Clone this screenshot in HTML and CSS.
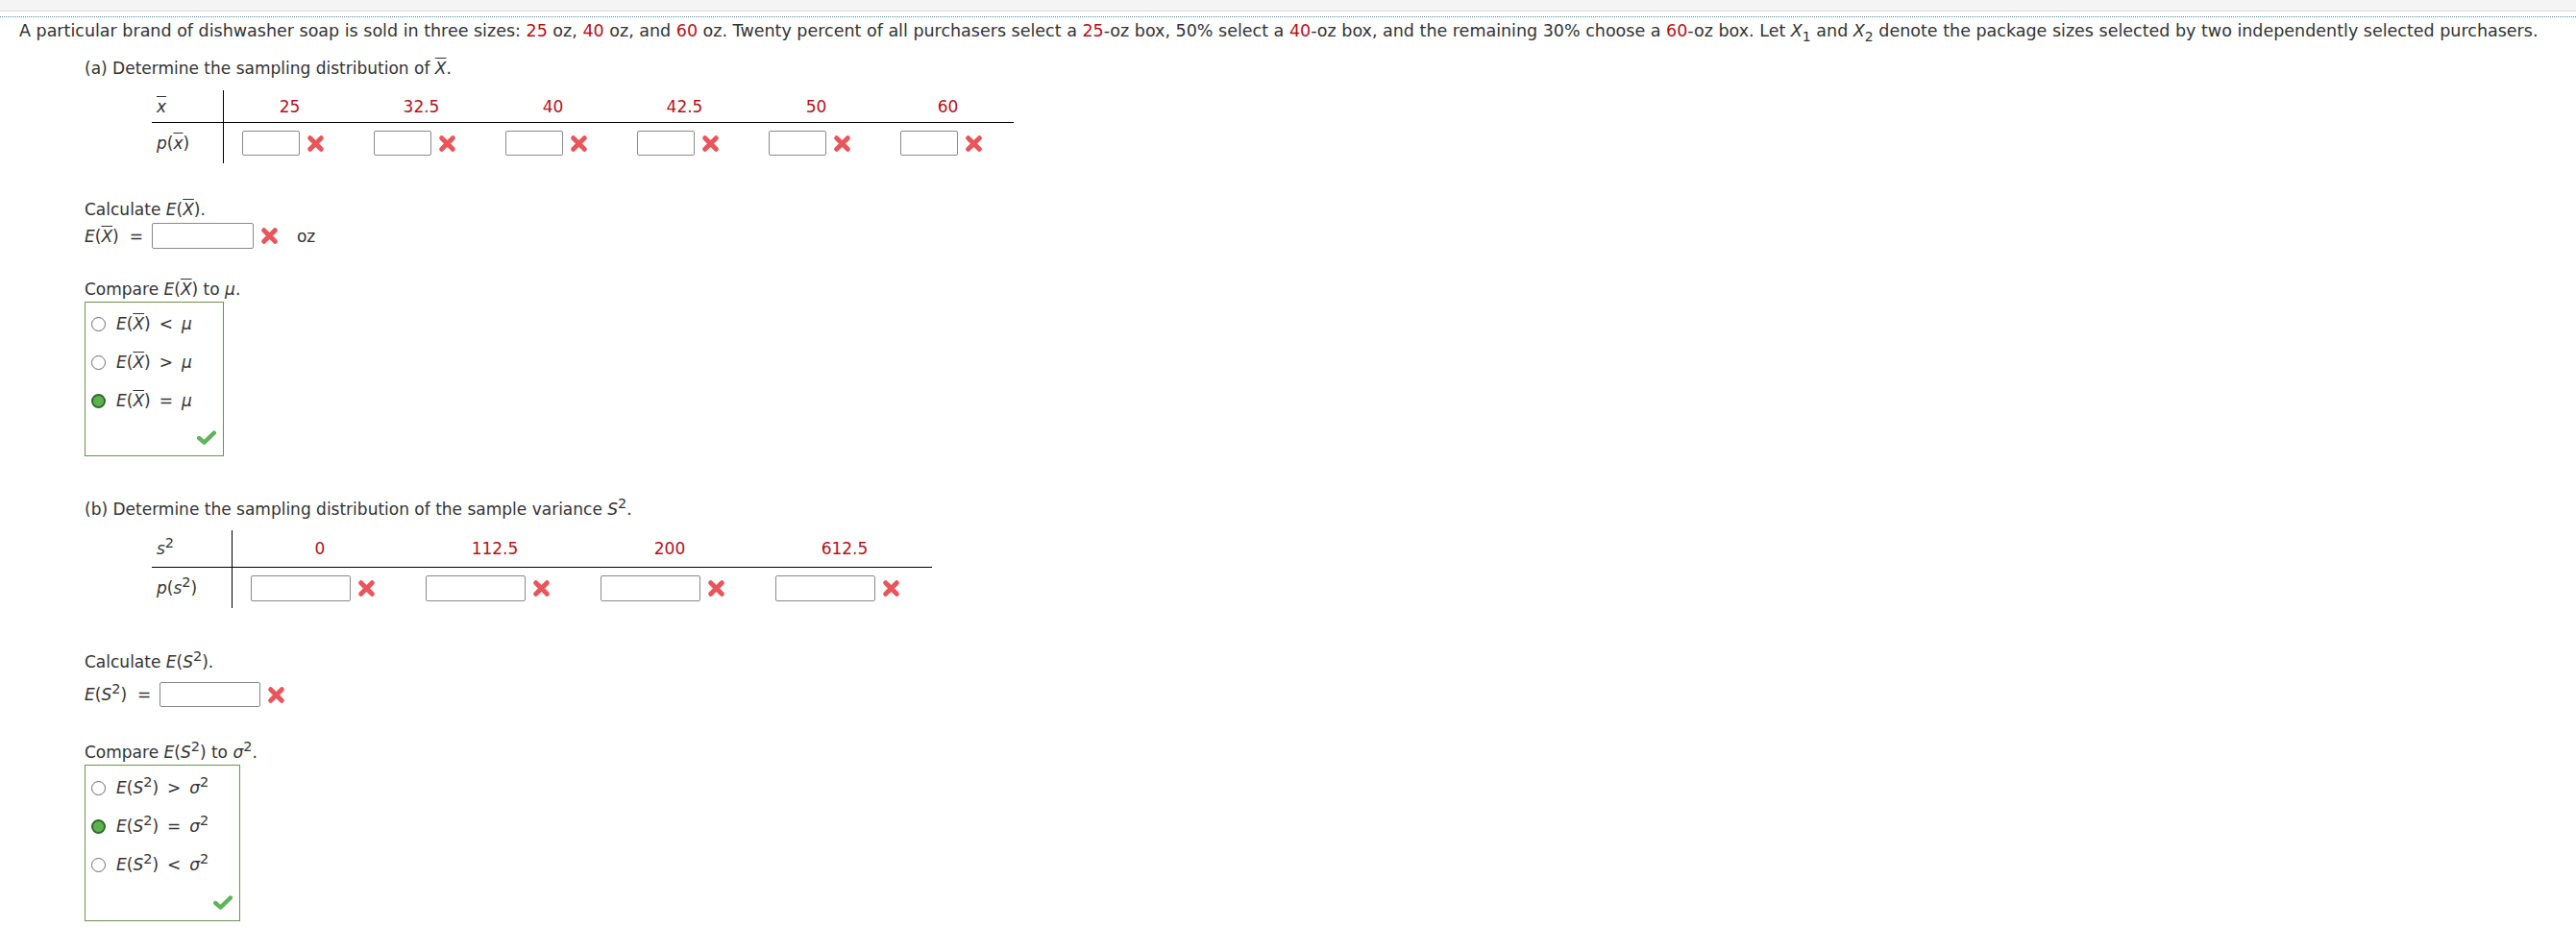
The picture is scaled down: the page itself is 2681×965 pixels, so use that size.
FILE: index.html
```html
<!DOCTYPE html>
<html lang="en">
<head>
<meta charset="utf-8">
<title>Sampling distribution</title>
<link rel="stylesheet" href="styles.css">
</head>
<body>
<div class="topbar"></div>
<div class="dotline"></div>
<p class="intro">A particular brand of dishwasher soap is sold in three sizes: <span class="num">25</span> oz, <span class="num">40</span> oz, and <span class="num">60</span> oz. Twenty percent of all purchasers select a <span class="num">25</span>-oz box, 50% select a <span class="num">40</span>-oz box, and the remaining 30% choose a <span class="num">60</span>-oz box. Let <i>X</i><sub>1</sub> and <i>X</i><sub>2</sub> denote the package sizes selected by two independently selected purchasers.</p>

<section class="part">
  <p class="heading">(a) Determine the sampling distribution of <i class="bar">X</i>.</p>
  <table class="dist dist-a">
    <tr class="head">
      <th><i class="bar">x</i></th>
      <td>25</td><td>32.5</td><td>40</td><td>42.5</td><td>50</td><td>60</td>
    </tr>
    <tr class="body">
      <th><i>p</i>(<i class="bar">x</i>)</th>
      <td><span class="cell"><span class="field"></span><svg class="xmark" viewBox="0 0 18 18"><path d="M3.5 3.5 L14.5 14.5 M14.5 3.5 L3.5 14.5"/></svg></span></td>
      <td><span class="cell"><span class="field"></span><svg class="xmark" viewBox="0 0 18 18"><path d="M3.5 3.5 L14.5 14.5 M14.5 3.5 L3.5 14.5"/></svg></span></td>
      <td><span class="cell"><span class="field"></span><svg class="xmark" viewBox="0 0 18 18"><path d="M3.5 3.5 L14.5 14.5 M14.5 3.5 L3.5 14.5"/></svg></span></td>
      <td><span class="cell"><span class="field"></span><svg class="xmark" viewBox="0 0 18 18"><path d="M3.5 3.5 L14.5 14.5 M14.5 3.5 L3.5 14.5"/></svg></span></td>
      <td><span class="cell"><span class="field"></span><svg class="xmark" viewBox="0 0 18 18"><path d="M3.5 3.5 L14.5 14.5 M14.5 3.5 L3.5 14.5"/></svg></span></td>
      <td><span class="cell"><span class="field"></span><svg class="xmark" viewBox="0 0 18 18"><path d="M3.5 3.5 L14.5 14.5 M14.5 3.5 L3.5 14.5"/></svg></span></td>
    </tr>
  </table>

  <p class="calc">Calculate <i>E</i>(<i class="bar">X</i>).</p>
  <div class="answer answer-a">
    <span class="expr"><i>E</i>(<i class="bar">X</i>)</span><span class="eq">=</span><span class="field field-wide"></span><svg class="xmark" viewBox="0 0 18 18"><path d="M3.5 3.5 L14.5 14.5 M14.5 3.5 L3.5 14.5"/></svg><span class="unit">oz</span>
  </div>

  <p class="compare">Compare <i>E</i>(<i class="bar">X</i>) to <i>μ</i>.</p>
  <div class="choices choices-a">
    <div class="opt"><span class="radio"></span><span><i>E</i>(<i class="bar">X</i>)<span class="op">&lt;</span><i>μ</i></span></div>
    <div class="opt"><span class="radio"></span><span><i>E</i>(<i class="bar">X</i>)<span class="op">&gt;</span><i>μ</i></span></div>
    <div class="opt"><span class="radio on"></span><span><i>E</i>(<i class="bar">X</i>)<span class="op">=</span><i>μ</i></span></div>
    <div class="checkrow"><svg class="check" viewBox="0 0 20 15"><path d="M2.2 8 L7.5 12.6 L17.8 2.6"/></svg></div>
  </div>
</section>

<section class="part part-b">
  <p class="heading">(b) Determine the sampling distribution of the sample variance <i>S</i><sup>2</sup>.</p>
  <table class="dist dist-b">
    <tr class="head">
      <th><i>s</i><sup>2</sup></th>
      <td>0</td><td>112.5</td><td>200</td><td>612.5</td>
    </tr>
    <tr class="body">
      <th><i>p</i>(<i>s</i><sup>2</sup>)</th>
      <td><span class="cell"><span class="field"></span><svg class="xmark" viewBox="0 0 18 18"><path d="M3.5 3.5 L14.5 14.5 M14.5 3.5 L3.5 14.5"/></svg></span></td>
      <td><span class="cell"><span class="field"></span><svg class="xmark" viewBox="0 0 18 18"><path d="M3.5 3.5 L14.5 14.5 M14.5 3.5 L3.5 14.5"/></svg></span></td>
      <td><span class="cell"><span class="field"></span><svg class="xmark" viewBox="0 0 18 18"><path d="M3.5 3.5 L14.5 14.5 M14.5 3.5 L3.5 14.5"/></svg></span></td>
      <td><span class="cell"><span class="field"></span><svg class="xmark" viewBox="0 0 18 18"><path d="M3.5 3.5 L14.5 14.5 M14.5 3.5 L3.5 14.5"/></svg></span></td>
    </tr>
  </table>

  <p class="calc">Calculate <i>E</i>(<i>S</i><sup>2</sup>).</p>
  <div class="answer answer-b">
    <span class="expr"><i>E</i>(<i>S</i><sup>2</sup>)</span><span class="eq">=</span><span class="field field-wide"></span><svg class="xmark" viewBox="0 0 18 18"><path d="M3.5 3.5 L14.5 14.5 M14.5 3.5 L3.5 14.5"/></svg>
  </div>

  <p class="compare">Compare <i>E</i>(<i>S</i><sup>2</sup>) to <i>σ</i><sup>2</sup>.</p>
  <div class="choices choices-b">
    <div class="opt"><span class="radio"></span><span><i>E</i>(<i>S</i><sup>2</sup>)<span class="op">&gt;</span><i>σ</i><sup>2</sup></span></div>
    <div class="opt"><span class="radio on"></span><span><i>E</i>(<i>S</i><sup>2</sup>)<span class="op">=</span><i>σ</i><sup>2</sup></span></div>
    <div class="opt"><span class="radio"></span><span><i>E</i>(<i>S</i><sup>2</sup>)<span class="op">&lt;</span><i>σ</i><sup>2</sup></span></div>
    <div class="checkrow"><svg class="check" viewBox="0 0 20 15"><path d="M2.2 8 L7.5 12.6 L17.8 2.6"/></svg></div>
  </div>
</section>
</body>
</html>
```
FILE: styles.css
```css
html, body {
  margin: 0;
  padding: 0;
  background: #fff;
}
body {
  font-family: "DejaVu Sans", Verdana, sans-serif;
  font-size: 17px;
  line-height: 22px;
  color: #333;
}
p { margin: 0; }
i { font-style: italic; }
sup {
  font-size: 0.85em;
  line-height: 0;
  vertical-align: 0.5em;
  font-style: normal;
}
sub {
  font-size: 0.8em;
  line-height: 0;
  vertical-align: -0.38em;
  font-style: normal;
}
.bar { text-decoration: overline; text-decoration-thickness: 1px; }

.topbar {
  height: 11px;
  background: #f4f4f4;
  border-bottom: 1px solid #dcdcdc;
}
.dotline {
  margin-top: 5px;
  border-top: 1px dotted #4f8c9e;
}
.intro {
  margin-top: 3px;
  padding-left: 20px;
  font-size: 17.5px;
  white-space: nowrap;
}
.num { color: #b3121c; }

.part { margin-left: 88px; }
.heading { margin-top: 17px; }
.part-b .heading { margin-top: 44px; }

.dist {
  border-collapse: collapse;
  margin-left: 70px;
  margin-top: 12px;
}
.dist th {
  text-align: left;
  font-weight: normal;
  padding: 0 0 0 5px;
  border-right: 1px solid #000;
}
.dist td {
  padding: 0;
  text-align: center;
  color: #b3121c;
}
.dist .head th, .dist .head td { border-bottom: 1px solid #000; }
.dist-a th { width: 69px; }
.dist-a td { width: 137px; }
.dist-a .head th, .dist-a .head td { height: 33px; }
.dist-a .body th, .dist-a .body td { height: 42px; }
.dist-b { margin-top: 11px; }
.dist-b th { width: 78px; }
.dist-b td { width: 182px; }
.dist-b .head th, .dist-b .head td { height: 38px; }
.dist-b .body th, .dist-b .body td { height: 42px; }

.cell {
  display: inline-flex;
  align-items: center;
  padding-right: 14px;
  vertical-align: middle;
}
.field {
  display: inline-block;
  box-sizing: border-box;
  width: 60px;
  height: 26px;
  border: 1px solid #8a8a8a;
  border-radius: 2px;
  background: #fff;
}
.dist-b .field { width: 104px; height: 27px; }
.xmark {
  width: 19px;
  height: 19px;
  margin-left: 7px;
  flex: none;
}
.xmark path {
  stroke: #e8555b;
  stroke-width: 4.8;
  stroke-linecap: round;
  fill: none;
}

.calc { margin-top: 37px; }
.part-b .calc { margin-top: 45px; }
.answer {
  display: flex;
  align-items: center;
  margin-top: 3px;
}
.answer-b { margin-top: 10px; }
.eq { margin: 0 9px 0 11px; }
.field-wide { width: 106px; height: 27px; }
.answer-b .field-wide { width: 105px; height: 26px; }
.unit { margin-left: 19px; }

.compare { margin-top: 31px; }
.part-b .compare { margin-top: 36px; }

.choices {
  display: inline-block;
  margin-top: 2px;
  border: 1px solid #6f8f55;
  padding: 2px 7px 0 6px;
}
.choices-b { padding-top: 3px; }
.opt {
  display: flex;
  align-items: center;
  height: 40px;
  padding-right: 25px;
}
.op { margin: 0 9px; font-style: normal; }
.radio {
  box-sizing: border-box;
  width: 15px;
  height: 15px;
  border: 1px solid #6b6b6b;
  border-radius: 50%;
  background: #fff;
  margin-right: 11px;
  flex: none;
}
.radio.on {
  border: 2px solid #2e6a2b;
  background: #5cb24f;
}
.checkrow {
  display: flex;
  justify-content: flex-end;
  align-items: center;
  height: 37px;
}
.choices-b .checkrow { height: 38px; }
.check { width: 20px; height: 15px; }
.check path {
  fill: none;
  stroke: #5fb45c;
  stroke-width: 4.4;
  stroke-linecap: round;
  stroke-linejoin: round;
}
```
